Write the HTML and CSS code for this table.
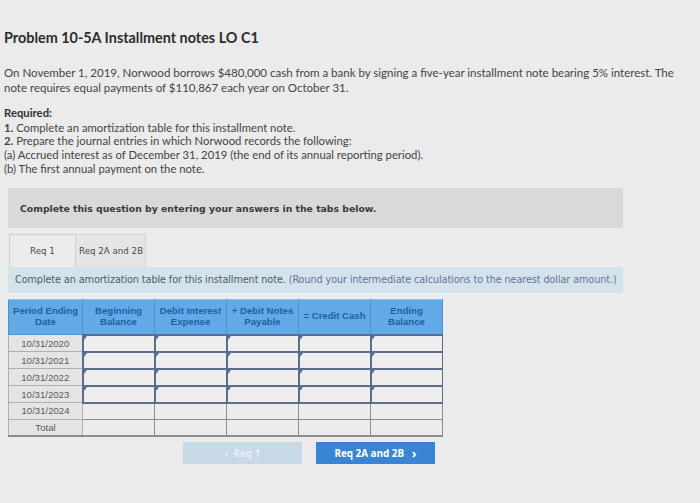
FILE: index.html
```html
<!DOCTYPE html>
<html>
<head>
<meta charset="utf-8">
<link rel="stylesheet" href="styles.css">
</head>
<body>
<div class="page">
  <h1 class="title">Problem 10-5A Installment notes LO C1</h1>
  <p class="intro">On November 1, 2019, Norwood borrows $480,000 cash from a bank by signing a five-year installment note bearing 5% interest. The note requires equal payments of $110,867 each year on October 31.</p>
  <div class="required">
    <div class="req-head">Required:</div>
    <div><b class="num">1.</b> Complete an amortization table for this installment note.</div>
    <div><b class="num">2.</b> Prepare the journal entries in which Norwood records the following:</div>
    <div>(a) Accrued interest as of December 31, 2019 (the end of its annual reporting period).</div>
    <div>(b) The first annual payment on the note.</div>
  </div>

  <div class="question">
    <div class="qbox">Complete this question by entering your answers in the tabs below.</div>
    <div class="tabs">
      <div class="tab active">Req 1</div>
      <div class="tab">Req 2A and 2B</div>
    </div>
    <div class="instr">Complete an amortization table for this installment note. <span class="hint">(Round your intermediate calculations to the nearest dollar amount.)</span></div>

    <table class="amort">
      <thead>
        <tr>
          <th>Period Ending<br>Date</th>
          <th>Beginning<br>Balance</th>
          <th>Debit Interest<br>Expense</th>
          <th>+ Debit Notes<br>Payable</th>
          <th>= Credit Cash</th>
          <th>Ending<br>Balance</th>
        </tr>
      </thead>
      <tbody>
        <tr class="in"><td class="date">10/31/2020</td><td></td><td></td><td></td><td></td><td></td></tr>
        <tr class="in"><td class="date">10/31/2021</td><td></td><td></td><td></td><td></td><td></td></tr>
        <tr class="in"><td class="date">10/31/2022</td><td></td><td></td><td></td><td></td><td></td></tr>
        <tr class="in"><td class="date">10/31/2023</td><td></td><td></td><td></td><td></td><td></td></tr>
        <tr class="plain"><td class="date">10/31/2024</td><td></td><td></td><td></td><td></td><td></td></tr>
        <tr class="plain last"><td class="date">Total</td><td></td><td></td><td></td><td></td><td></td></tr>
      </tbody>
    </table>

    <div class="nav">
      <div class="btn prev">&lsaquo;&nbsp;&nbsp;Req 1</div>
      <div class="btn next">Req 2A and 2B&nbsp;&nbsp;&nbsp;<span class="chev">&rsaquo;</span></div>
    </div>
  </div>
</div>
</body>
</html>
```

FILE: styles.css
```css
html, body {
  margin: 0;
  padding: 0;
  background: #ebebeb;
}
body {
  font-family: Lato, "Open Sans", sans-serif;
  color: #3b3b3b;
}
.page {
  padding: 30px 0 0 4px;
  width: 690px;
}
.title {
  margin: 0;
  font-size: 14.4px;
  font-weight: 700;
  color: #2c2c2c;
  line-height: 16px;
}
.intro {
  margin: 19px 0 0 0;
  font-size: 11.5px;
  line-height: 15px;
  color: #444;
  width: 688px;
}
.required {
  margin-top: 11px;
  font-size: 11.3px;
  line-height: 13.7px;
  color: #444;
}
.req-head {
  font-weight: 700;
  color: #333;
  margin-bottom: 1px;
}
.num { font-weight: 700; }

.question {
  margin: 12px 0 0 4px;
  width: 615px;
}
.qbox {
  background: #d9d9d9;
  height: 40px;
  display: flex;
  align-items: center;
  padding-left: 12px;
  padding-top: 2px;
  box-sizing: border-box;
  font-family: "DejaVu Sans", Verdana, sans-serif;
  font-weight: 700;
  font-size: 9.3px;
  color: #3a3a3a;
}
.tabs {
  display: flex;
  margin-top: 6px;
  padding-left: 1px;
}
.tab {
  height: 33px;
  display: flex;
  align-items: center;
  box-sizing: border-box;
  font-family: "DejaVu Sans", Verdana, sans-serif;
  font-size: 8.7px;
  color: #4a4a4a;
  border: 1px solid #d4d4d4;
  border-bottom: none;
  background: #e5e5e5;
}
.tab.active {
  width: 67px;
  padding-left: 20px;
  background: #ececec;
  border-color: #cfcfcf;
}
.tab:not(.active) {
  width: 70px;
  padding-left: 3px;
  border-left: none;
}
.instr {
  background: #d3e3eb;
  height: 26px;
  display: flex;
  align-items: center;
  padding-left: 7px;
  font-family: "DejaVu Sans", Verdana, sans-serif;
  font-size: 9.7px;
  color: #4e5a66;
  white-space: nowrap;
  box-sizing: border-box;
  letter-spacing: -0.1px;
}
.hint { color: #6d6f96; margin-left: 3px; }

.amort {
  margin-top: 6px;
  border-collapse: collapse;
  width: 435px;
  table-layout: fixed;
  font-family: "Liberation Sans", Arial, sans-serif;
}
.amort th {
  background: #62a9e8;
  color: #1f5fa3;
  font-size: 9.6px;
  font-weight: 700;
  line-height: 10.5px;
  height: 34px;
  padding: 0;
  border: 1px solid #4d93d4;
  border-top: 1px solid #8fc0ea;
}
.amort th:first-child { width: 73px; }
.amort td {
  height: 15px;
  padding: 0;
  border: 1px solid #a9a9a9;
  background: #ececec;
  position: relative;
}
.amort td.date {
  font-size: 9.6px;
  color: #5a5a5a;
  text-align: center;
  background: #e4e4e4;
  border-color: #b0b0b0;
}
.amort tr.in td:not(.date) {
  border: 2px solid #5b6d8a;
  border-right-width: 1px;
  background: #eeeeee;
}
.amort tr.in td:not(.date)::before {
  content: "";
  position: absolute;
  left: 0;
  top: 0;
  width: 0;
  height: 0;
  border-top: 4px solid #4a6fa8;
  border-right: 3px solid transparent;
}
.amort tr.plain td:not(.date) {
  border-color: #8d8d8d;
  background: #ececec;
}
.amort tr.last td {
  border-bottom: 2px solid #8a8a8a;
}

.nav {
  display: flex;
  gap: 14px;
  margin: 5px 0 0 175px;
}
.btn {
  width: 119px;
  height: 22px;
  display: flex;
  align-items: center;
  justify-content: center;
  font-family: "Open Sans", sans-serif;
  font-weight: 700;
  font-size: 9.9px;
}
.btn.prev {
  background: #c8d9e6;
  color: #e7eef5;
}
.btn.next {
  background: #3a85d3;
  color: #ffffff;
}
.chev { font-size: 13px; line-height: 10px; }
```
